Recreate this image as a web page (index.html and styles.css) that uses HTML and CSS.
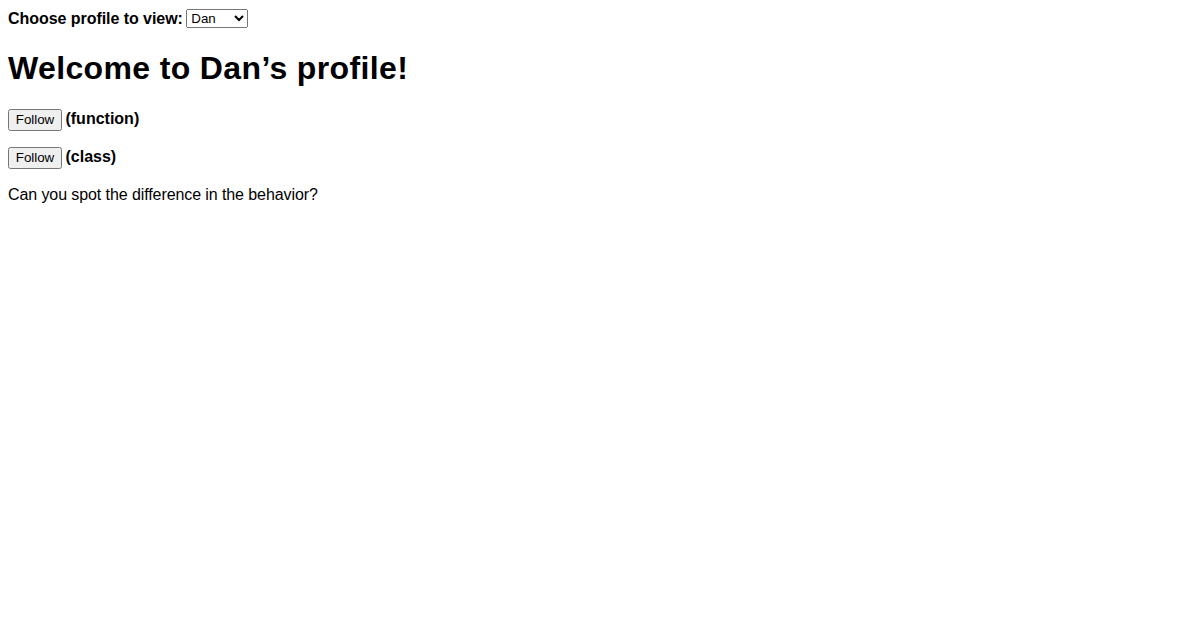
FILE: index.html
```html
<!DOCTYPE html>
<html lang="en">

<head>
    <meta charset="UTF-8">
    <meta name="viewport" content="width=device-width, initial-scale=1.0">
    <title>Profile</title>
    <link rel="stylesheet" href="styles.css">
</head>

<body>
    <label class="profile-picker">
        <b>Choose profile to view:</b>
        <select id="profile-select" class="profile-select">
            <option value="Dan">Dan</option>
            <option value="Sophie">Sophie</option>
            <option value="Sunil">Sunil</option>
        </select>
    </label>
    <h1 class="title">Welcome to Dan’s profile!</h1>
    <p>
        <button class="follow-btn">Follow</button>
        <b>(function)</b>
    </p>
    <p>
        <button class="follow-btn">Follow</button>
        <b>(class)</b>
    </p>
    <p class="note">Can you spot the difference in the behavior?</p>
</body>

</html>
```

FILE: styles.css
```css
body {
    font-family: "Liberation Sans", Arial, sans-serif;
    font-size: 16px;
    line-height: 20px;
    color: #000;
}

.profile-picker {
    display: block;
    height: 21px;
    line-height: 21px;
}

.profile-picker b {
    letter-spacing: -0.05px;
}

.profile-select {
    font-family: "Liberation Sans", Arial, sans-serif;
    width: 62px;
    height: 19px;
    vertical-align: top;
    margin: 1px 0 0 -1px;
}

.title {
    line-height: normal;
    letter-spacing: 0.36px;
}

p {
    min-height: 20px;
}

.follow-btn {
    font-family: "Liberation Sans", Arial, sans-serif;
    width: 54px;
    height: 22px;
    padding: 1px 4px;
    margin-right: -1px;
    vertical-align: middle;
}

.note {
    letter-spacing: -0.09px;
}
```
